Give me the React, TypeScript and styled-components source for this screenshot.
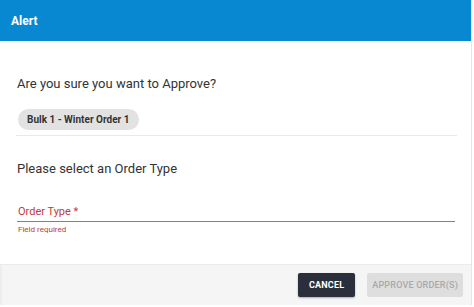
import React from "react";
import styled, { createGlobalStyle } from "styled-components";

const Global = createGlobalStyle`
  html, body { margin: 0; padding: 0; background: #ffffff; }
  body { font-family: Roboto, "Liberation Sans", Arial, sans-serif; }
  * { box-sizing: border-box; }
`;

const Dialog = styled.div`
  width: 472px;
  height: 305px;
  display: flex;
  flex-direction: column;
  background: #ffffff;
  border-right: 1px solid #e6e6e6;
`;

const Header = styled.div`
  height: 41px;
  flex: none;
  display: flex;
  align-items: center;
  padding: 0 11px;
  background: #0788d0;
  color: #ffffff;
  font-size: 12px;
  font-weight: 700;
`;

const Content = styled.div`
  flex: 1;
  display: flex;
  flex-direction: column;
  align-items: flex-start;
  padding: 0 14px 0 17px;
`;

const Prompt = styled.div<{ $top: number }>`
  margin-top: ${(p) => p.$top}px;
  font-size: 13px;
  line-height: 16px;
  color: #333333;
`;

const Chip = styled.div`
  margin-top: 17px;
  margin-left: 1px;
  height: 21px;
  display: flex;
  align-items: center;
  padding: 0 10px 0 9px;
  border-radius: 11px;
  background: #e2e2e2;
  color: #333333;
  font-size: 10px;
  font-weight: 700;
`;

const Divider = styled.div`
  align-self: stretch;
  margin-top: 5px;
  margin-left: -1px;
  height: 1px;
  background: #e9e9e9;
`;

const Field = styled.div`
  align-self: stretch;
  margin-top: 28px;
  margin-right: 2px;
  display: flex;
  flex-direction: column;
`;

const FieldLabel = styled.div`
  padding: 0 1px 2px;
  font-size: 11px;
  line-height: 14px;
  color: #c03a3a;
  border-bottom: 1px solid #b56b74;
`;

const Helper = styled.div`
  margin-top: 3px;
  padding-left: 1px;
  font-size: 8px;
  line-height: 10px;
  color: #c03a3a;
`;

const Footer = styled.div`
  height: 41px;
  flex: none;
  display: flex;
  align-items: center;
  justify-content: flex-end;
  gap: 12px;
  padding: 0 8px 0 0;
  background: #f5f5f5;
  border-top: 1px solid #ebebeb;
  box-shadow: inset 2px 0 0 #ededed;
`;

const Button = styled.button<{ $primary?: boolean }>`
  height: 24px;
  border: none;
  border-radius: 2px;
  font-family: Roboto, "Liberation Sans", Arial, sans-serif;
  font-size: 9px;
  letter-spacing: 0.2px;
  padding: ${(p) => (p.$primary ? "0 11px" : "0 5px")};
  font-weight: ${(p) => (p.$primary ? 700 : 500)};
  background: ${(p) => (p.$primary ? "#2b2f3c" : "#dedede")};
  color: ${(p) => (p.$primary ? "#ffffff" : "#a9a9a9")};
  box-shadow: ${(p) => (p.$primary ? "0 1px 2px rgba(0,0,0,0.3)" : "none")};
`;

export default function App() {
  return (
    <>
      <Global />
      <Dialog>
        <Header>Alert</Header>
        <Content>
          <Prompt $top={35}>Are you sure you want to Approve?</Prompt>
          <Chip>Bulk 1 - Winter Order 1</Chip>
          <Divider />
          <Prompt $top={25}>Please select an Order Type</Prompt>
          <Field>
            <FieldLabel>Order Type *</FieldLabel>
            <Helper>Field required</Helper>
          </Field>
        </Content>
        <Footer>
          <Button $primary>CANCEL</Button>
          <Button disabled>APPROVE ORDER(S)</Button>
        </Footer>
      </Dialog>
    </>
  );
}
